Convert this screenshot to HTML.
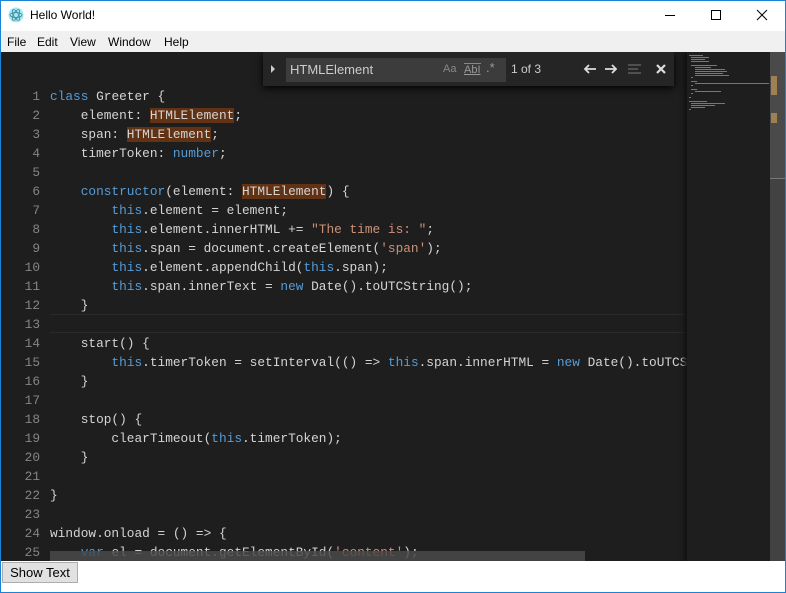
<!DOCTYPE html>
<html><head><style>
body{margin:0;width:786px;height:593px;position:relative;overflow:hidden;background:#fff;font-family:"Liberation Sans",sans-serif}
.frame{position:absolute;inset:0;border:1px solid #1883d7;box-sizing:border-box}
.title{position:absolute;left:0;top:0;width:786px;height:31px;background:#fff}
.title span{position:absolute;left:30px;top:8px;font-size:12px;color:#000}
.menu{position:absolute;left:1px;top:31px;width:784px;height:21px;background:#f0f0f0;font-size:12px}
.menu span{position:absolute;top:4px}
.ed{position:absolute;left:1px;top:52px;width:784px;height:509px;background:#1e1e1e;overflow:hidden}
.code{position:absolute;left:0;top:35px;font-family:"Liberation Mono",monospace;font-size:12.8px;color:#d4d4d4;white-space:pre;line-height:19px}
.ln{position:absolute;left:0;width:39px;text-align:right;color:#858585}
.tx{position:absolute;left:49px}
.k{color:#569cd6}.s{color:#ce9178}.h{background:#613214}
.find{position:absolute;left:262px;top:0;width:411px;height:34px;background:#252526;box-shadow:0 2px 8px #000}
.inp{position:absolute;left:23px;top:6px;width:220px;height:24px;background:#3c3c3c}
.mm{position:absolute;height:1px;background:#777}
</style></head><body>
<div class="title">
<svg style="position:absolute;left:8px;top:7px" width="16" height="16"><circle cx="8" cy="8" r="7.5" fill="#9feaf9"/><ellipse cx="8" cy="8" rx="6" ry="2.5" fill="none" stroke="#47848f" stroke-width=".8"/><ellipse cx="8" cy="8" rx="6" ry="2.5" fill="none" stroke="#47848f" stroke-width=".8" transform="rotate(60 8 8)"/><ellipse cx="8" cy="8" rx="6" ry="2.5" fill="none" stroke="#47848f" stroke-width=".8" transform="rotate(-60 8 8)"/></svg>
<span>Hello World!</span>
<svg style="position:absolute;left:660px;top:8px" width="120" height="14" stroke="#000" fill="none"><line x1="5" y1="7.5" x2="15" y2="7.5"/><rect x="51.5" y="2.5" width="9" height="9"/><path d="M97 2l10 10M107 2l-10 10"/></svg>
</div>
<div class="menu"><span style="left:6px">File</span><span style="left:36px">Edit</span><span style="left:69px">View</span><span style="left:107px">Window</span><span style="left:163px">Help</span></div>
<div class="ed">
<div class="code">
<div class="ln" style="top:0">1</div><div class="tx" style="top:0"><span class="k">class</span> Greeter {</div>
<div class="ln" style="top:19px">2</div><div class="tx" style="top:19px">    element: <span class="h">HTMLElement</span>;</div>
<div class="ln" style="top:38px">3</div><div class="tx" style="top:38px">    span: <span class="h">HTMLElement</span>;</div>
<div class="ln" style="top:57px">4</div><div class="tx" style="top:57px">    timerToken: <span class="k">number</span>;</div>
<div class="ln" style="top:76px">5</div>
<div class="ln" style="top:95px">6</div><div class="tx" style="top:95px">    <span class="k">constructor</span>(element: <span class="h">HTMLElement</span>) {</div>
<div class="ln" style="top:114px">7</div><div class="tx" style="top:114px">        <span class="k">this</span>.element = element;</div>
<div class="ln" style="top:133px">8</div><div class="tx" style="top:133px">        <span class="k">this</span>.element.innerHTML += <span class="s">"The time is: "</span>;</div>
<div class="ln" style="top:152px">9</div><div class="tx" style="top:152px">        <span class="k">this</span>.span = document.createElement(<span class="s">'span'</span>);</div>
<div class="ln" style="top:171px">10</div><div class="tx" style="top:171px">        <span class="k">this</span>.element.appendChild(<span class="k">this</span>.span);</div>
<div class="ln" style="top:190px">11</div><div class="tx" style="top:190px">        <span class="k">this</span>.span.innerText = <span class="k">new</span> Date().toUTCString();</div>
<div class="ln" style="top:209px">12</div><div class="tx" style="top:209px">    }</div>
<div style="position:absolute;left:49px;top:227px;width:640px;height:19px;border-top:1px solid #2a2a2a;border-bottom:1px solid #2a2a2a;box-sizing:border-box"></div>
<div class="ln" style="top:228px">13</div>
<div class="ln" style="top:247px">14</div><div class="tx" style="top:247px">    start() {</div>
<div class="ln" style="top:266px">15</div><div class="tx" style="top:266px">        <span class="k">this</span>.timerToken = setInterval(() => <span class="k">this</span>.span.innerHTML = <span class="k">new</span> Date().toUTCS</div>
<div class="ln" style="top:285px">16</div><div class="tx" style="top:285px">    }</div>
<div class="ln" style="top:304px">17</div>
<div class="ln" style="top:323px">18</div><div class="tx" style="top:323px">    stop() {</div>
<div class="ln" style="top:342px">19</div><div class="tx" style="top:342px">        clearTimeout(<span class="k">this</span>.timerToken);</div>
<div class="ln" style="top:361px">20</div><div class="tx" style="top:361px">    }</div>
<div class="ln" style="top:380px">21</div>
<div class="ln" style="top:399px">22</div><div class="tx" style="top:399px">}</div>
<div class="ln" style="top:418px">23</div>
<div class="ln" style="top:437px">24</div><div class="tx" style="top:437px">window.onload = () => {</div>
<div class="ln" style="top:456px">25</div><div class="tx" style="top:456px">    <span class="k">var</span> el = document.getElementById(<span class="s">'content'</span>);</div>
</div>
<div style="position:absolute;left:49px;top:499px;width:535px;height:10px;background:#4a4a4a;opacity:.85"></div>
<div style="position:absolute;left:686px;top:0;width:83px;height:509px;background:#1e1e1e;box-shadow:-3px 0 4px #111">
<div class="mm" style="left:2px;top:3px;width:14px"></div>
<div class="mm" style="left:4px;top:5px;width:18px"></div>
<div class="mm" style="left:4px;top:7px;width:14px"></div>
<div class="mm" style="left:4px;top:9px;width:18px"></div>
<div class="mm" style="left:4px;top:13px;width:26px"></div>
<div class="mm" style="left:8px;top:15px;width:16px"></div>
<div class="mm" style="left:8px;top:17px;width:30px"></div>
<div class="mm" style="left:8px;top:19px;width:32px"></div>
<div class="mm" style="left:8px;top:21px;width:28px"></div>
<div class="mm" style="left:8px;top:23px;width:34px"></div>
<div class="mm" style="left:4px;top:25px;width:2px"></div>
<div class="mm" style="left:4px;top:29px;width:6px"></div>
<div class="mm" style="left:8px;top:31px;width:74px"></div>
<div class="mm" style="left:4px;top:33px;width:2px"></div>
<div class="mm" style="left:4px;top:37px;width:6px"></div>
<div class="mm" style="left:8px;top:39px;width:26px"></div>
<div class="mm" style="left:4px;top:41px;width:2px"></div>
<div class="mm" style="left:2px;top:45px;width:2px"></div>
<div class="mm" style="left:2px;top:49px;width:18px"></div>
<div class="mm" style="left:4px;top:51px;width:34px"></div>
<div class="mm" style="left:4px;top:53px;width:24px"></div>
<div class="mm" style="left:4px;top:55px;width:14px"></div>
<div class="mm" style="left:2px;top:57px;width:2px"></div>
</div>
<div style="position:absolute;left:769px;top:0;width:15px;height:509px;background:#424242"></div>
<div style="position:absolute;left:769px;top:0;width:15px;height:126px;background:#4a4a4a;border-bottom:1px solid #777"></div>
<div style="position:absolute;left:770px;top:24px;width:6px;height:19px;background:#a08050"></div>
<div style="position:absolute;left:770px;top:61px;width:6px;height:10px;background:#a08050"></div>
<div class="find">
<svg style="position:absolute;left:7px;top:13px" width="6" height="8"><path d="M1 0l4 4-4 4z" fill="#ccc"/></svg>
<div class="inp"><span style="position:absolute;left:4px;top:4px;font-size:13px;color:#ccc">HTMLElement</span>
<span style="position:absolute;left:157px;top:5px;font-size:11px;color:#888">Aa</span>
<span style="position:absolute;left:178px;top:5px;font-size:11px;color:#999;text-decoration:underline;border-top:1px solid #888;line-height:12px">AbI</span>
<span style="position:absolute;left:200px;top:2px;font-size:13px;color:#999">.*</span></div>
<span style="position:absolute;left:248px;top:10px;font-size:12px;color:#ccc">1 of 3</span>
<svg style="position:absolute;left:320px;top:10px" width="90" height="14" stroke="#ddd" stroke-width="1.8" fill="none"><path d="M13 7H2M6 3L2 7l4 4"/><path d="M22 7h11M29 3l4 4-4 4"/><path d="M45 3h13M45 7h10M45 11h13" stroke="#555"/><path d="M74 3l8 8M82 3l-8 8" stroke-width="2.2"/></svg>
</div>
</div>
<div style="position:absolute;left:2px;top:562px;width:76px;height:21px;background:#e1e1e1;border:1px solid #adadad;box-sizing:border-box;font-size:13px;text-align:center;line-height:19px;color:#000">Show Text</div>
<div class="frame"></div>
</body></html>
